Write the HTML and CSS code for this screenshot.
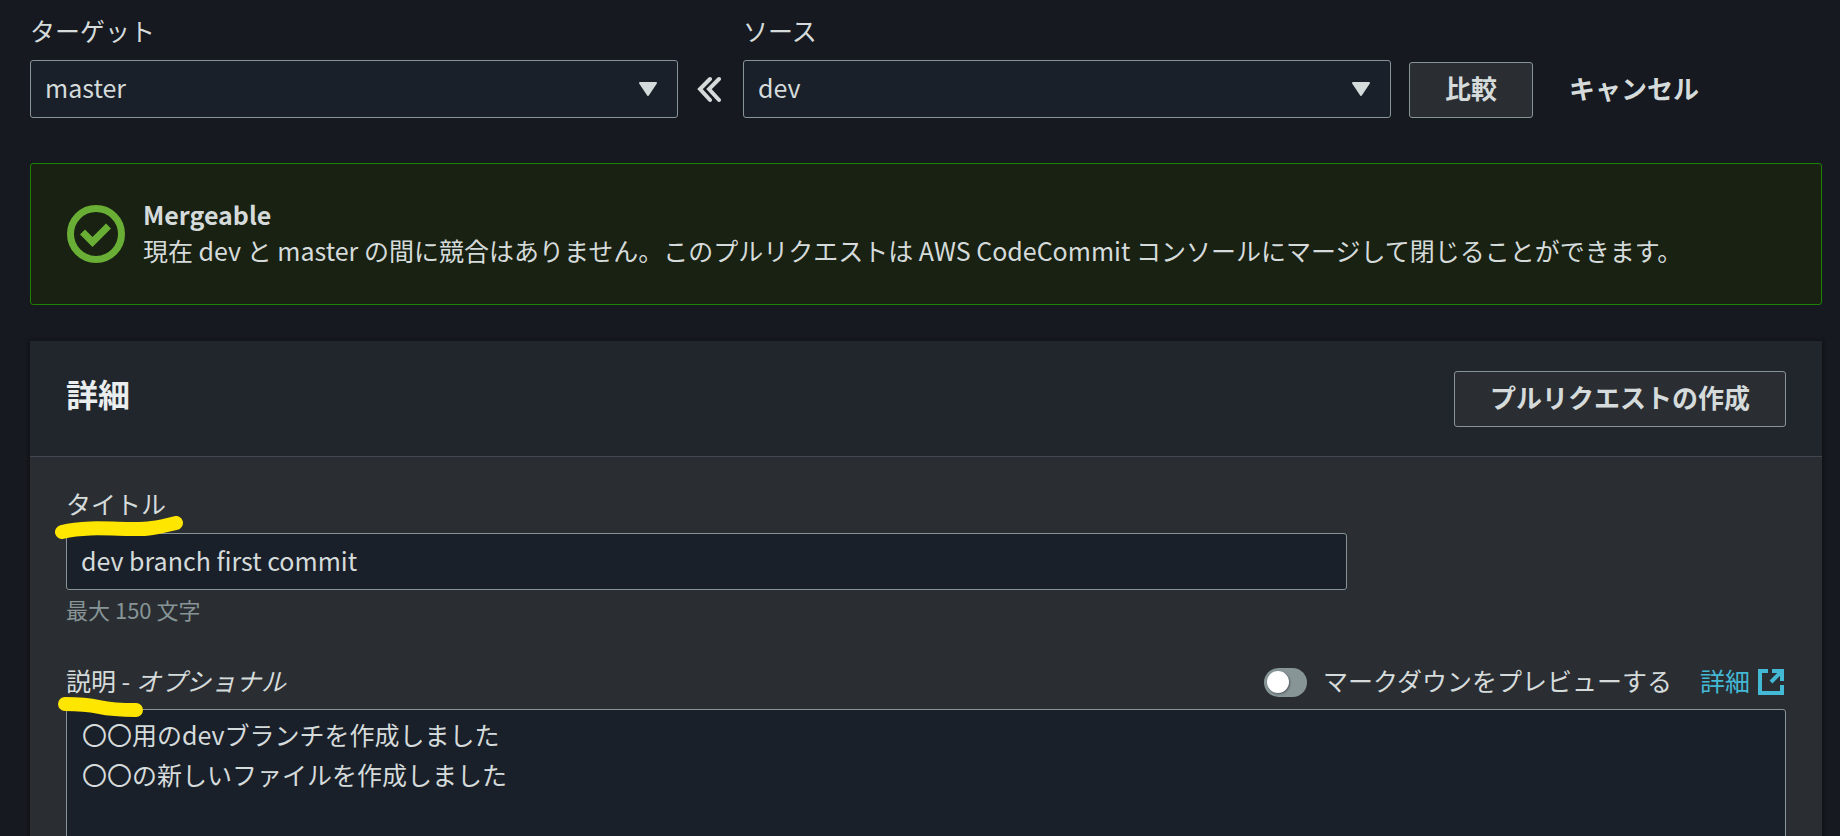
FILE: index.html
```html
<!DOCTYPE html>
<html lang="ja">
<head>
    <meta charset="UTF-8">
    <meta name="viewport" content="width=device-width, initial-scale=1.0">
    <title>プルリクエストの作成</title>
    <link rel="stylesheet" href="styles.css">
</head>
<body>
    <main>
        <form class="compare">
            <div class="field">
                <label for="target">ターゲット</label>
                <div class="select">
                    <select id="target">
                        <option>master</option>
                        <option>dev</option>
                    </select>
                    <svg class="arrow" viewBox="0 0 20 16"><path d="M2 2h16L10 14z"/></svg>
                </div>
            </div>
            <svg class="chevrons" viewBox="0 0 24 28"><path d="M13 4L3 14l10 11M22 4L12 14l10 11"/></svg>
            <div class="field">
                <label for="source">ソース</label>
                <div class="select">
                    <select id="source">
                        <option>dev</option>
                        <option>master</option>
                    </select>
                    <svg class="arrow" viewBox="0 0 20 16"><path d="M2 2h16L10 14z"/></svg>
                </div>
            </div>
            <div class="actions">
                <button type="button" class="btn">比較</button>
                <button type="button" class="btn btn-link">キャンセル</button>
            </div>
        </form>

        <div class="alert">
            <svg class="alert-icon" viewBox="0 0 58 58">
                <circle cx="29" cy="29" r="25.5"/>
                <path d="M15.5 27l10 10 16-16"/>
            </svg>
            <div class="alert-text">
                <strong>Mergeable</strong>
                <p>現在 dev と master の間に競合はありません。このプルリクエストは AWS CodeCommit コンソールにマージして閉じることができます。</p>
            </div>
        </div>

        <section class="card">
            <header class="card-header">
                <h2>詳細</h2>
                <button type="button" class="btn">プルリクエストの作成</button>
            </header>
            <div class="card-body">
                <div class="title-field">
                    <label for="title">タイトル</label>
                    <svg class="marker marker-title" viewBox="0 0 130 24"><path d="M8 16C40 8 76 16 98 12Q106 11 122 7"/></svg>
                    <input type="text" id="title" value="dev branch first commit">
                    <p class="hint">最大 150 文字</p>
                </div>
                <div class="desc-field">
                    <div class="desc-head">
                        <label for="desc">説明 - <em>オプショナル</em></label>
                        <div class="preview">
                            <label class="toggle"><input type="checkbox">マークダウンをプレビューする</label>
                            <a href="#">詳細
                                <svg class="external" viewBox="0 0 26 26"><path d="M10 2H2v22h22v-8M14 2h10v10M24 2L13 13"/></svg>
                            </a>
                        </div>
                    </div>
                    <svg class="marker marker-desc" viewBox="0 0 88 24"><path d="M8 8Q28 8 42 11T79 14"/></svg>
                    <textarea id="desc">〇〇用のdevブランチを作成しました
〇〇の新しいファイルを作成しました</textarea>
                </div>
            </div>
        </section>
    </main>
</body>
</html>
```
FILE: styles.css
```css
* {
  margin: 0;
  padding: 0;
  box-sizing: border-box;
}

body {
  height: 100vh;
  overflow: hidden;
  background-color: #16191f;
  color: #d5dbdb;
  font-family: "Noto Sans CJK JP", sans-serif;
  font-size: 25px;
  line-height: 36px;
}

main {
  padding: 12px 18px 0 30px;
}

input,
select,
textarea,
button {
  font: inherit;
  color: inherit;
}

label {
  display: block;
}

/* branch selectors */
.compare {
  display: flex;
  align-items: flex-end;
}

.field {
  flex: 1;
}

.field label {
  margin-bottom: 12px;
}

.select {
  position: relative;
}

select {
  display: block;
  width: 100%;
  height: 58px;
  padding: 0 14px 4px;
  appearance: none;
  background-color: #1a2029;
  border: 1px solid #879596;
  border-radius: 3px;
}

.arrow {
  position: absolute;
  top: 21px;
  right: 20px;
  width: 20px;
  height: 16px;
  fill: #d5dbdb;
  stroke: #d5dbdb;
  stroke-width: 2;
  stroke-linejoin: round;
  pointer-events: none;
}

.chevrons {
  width: 24px;
  height: 28px;
  margin: 0 22px 15px 19px;
  fill: none;
  stroke: #d5dbdb;
  stroke-width: 4;
  stroke-linecap: round;
}

.actions {
  display: flex;
  width: 431px;
  padding-left: 18px;
}

.btn {
  height: 56px;
  padding: 0 35px 4px;
  background-color: #2a2e33;
  border: 1px solid #879596;
  border-radius: 3px;
  font-size: 26px;
  font-weight: bold;
}

.btn-link {
  background: none;
  border-color: transparent;
}

/* merge status */
.alert {
  display: flex;
  align-items: center;
  gap: 18px;
  margin-top: 45px;
  padding: 32px 36px;
  background-color: #192112;
  border: 1px solid #1d8102;
  border-radius: 3px;
}

.alert-icon {
  flex: none;
  width: 58px;
  height: 58px;
  fill: none;
  stroke: #6aaf35;
  stroke-width: 7;
}

.alert-text {
  padding-bottom: 4px;
}

.alert strong {
  display: block;
}

/* details */
.card {
  margin-top: 36px;
  background-color: #2a2e33;
  box-shadow: 0 1px 3px 1px #0f1114;
}

.card-header {
  display: flex;
  justify-content: space-between;
  align-items: center;
  padding: 30px 36px 29px;
  background-color: #21252c;
  border-bottom: 1px solid #414750;
}

h2 {
  padding-bottom: 12px;
  font-size: 32px;
  line-height: 36px;
  color: #eaeded;
}

.card-body {
  padding: 28px 36px;
}

.title-field,
.desc-field {
  position: relative;
}

.title-field label {
  margin-bottom: 12px;
}

.title-field input {
  display: block;
  width: 75%;
  max-width: 1281px;
  height: 57px;
  padding: 0 14px 4px;
  background-color: #1a2029;
  border: 1px solid #879596;
  border-radius: 3px;
}

.hint {
  margin-top: 1px;
  font-size: 22px;
  color: #879596;
}

.desc-field {
  margin-top: 35px;
}

.desc-head {
  display: flex;
  justify-content: space-between;
  margin-bottom: 11px;
}

.preview {
  display: flex;
  gap: 28px;
  padding-right: 2px;
}

.toggle {
  display: flex;
  align-items: center;
  gap: 16px;
}

.toggle input {
  display: flex;
  align-items: center;
  width: 43px;
  height: 29px;
  margin-top: 4px;
  padding: 0 3px;
  appearance: none;
  background-color: #879596;
  border-radius: 15px;
}

.toggle input::before {
  content: "";
  width: 22px;
  height: 22px;
  border-radius: 50%;
  background-color: #fff;
  box-shadow: 1px 1px 2px #545b64;
}

a {
  display: flex;
  align-items: center;
  gap: 8px;
  color: #44b9d6;
  text-decoration: none;
}

.external {
  width: 26px;
  height: 26px;
  margin-top: 4px;
  fill: none;
  stroke: #44b9d6;
  stroke-width: 4;
}

textarea {
  display: block;
  width: 100%;
  height: 250px;
  padding: 4px 15px;
  line-height: 40px;
  resize: none;
  background-color: #1a2029;
  border: 1px solid #879596;
  border-radius: 3px;
}

/* highlighter strokes under the labels */
.marker {
  position: absolute;
  height: 24px;
  fill: none;
  stroke: #ffe600;
  stroke-width: 14;
  stroke-linecap: round;
}

.marker-title {
  top: 31px;
  left: -12px;
  width: 130px;
}

.marker-desc {
  top: 34px;
  left: -9px;
  width: 88px;
}
```
